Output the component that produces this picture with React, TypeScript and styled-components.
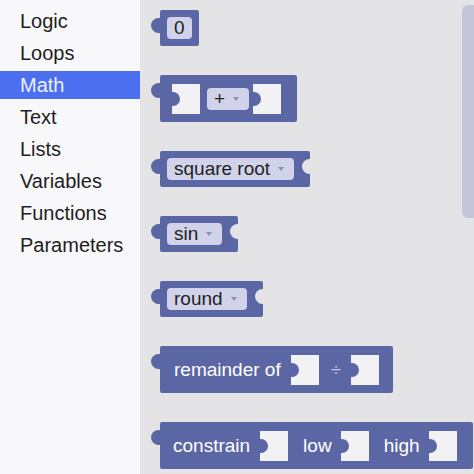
import React from 'react';
import styled, { createGlobalStyle, css } from 'styled-components';

const BLOCK = '#5b67a5';
const FLY = '#e4e4e6';

const GlobalStyle = createGlobalStyle`
  html, body { margin: 0; padding: 0; background: ${FLY}; }
  body { font-family: "Liberation Sans", Arial, sans-serif; }
  * { box-sizing: border-box; }
`;

const Page = styled.div`
  display: flex;
  width: 474px;
  height: 474px;
  overflow: hidden;
`;

const Toolbox = styled.nav`
  width: 140px;
  flex: none;
  background: #f8f8fa;
  padding-top: 7px;
  display: flex;
  flex-direction: column;
  gap: 4px;
`;

const Category = styled.div<{ $selected?: boolean }>`
  height: 28px;
  display: flex;
  align-items: center;
  padding: 1px 0 0 20px;
  font-size: 20px;
  color: ${(p) => (p.$selected ? '#eef2ff' : '#1e1e1e')};
  background: ${(p) => (p.$selected ? '#4c6ff0' : 'transparent')};
`;

const Flyout = styled.div`
  flex: 1;
  position: relative;
  background: ${FLY};
  padding: 10px 0 0 20px;
  display: flex;
  flex-direction: column;
  align-items: flex-start;
  gap: 29px;
`;

const Scrollbar = styled.div`
  position: absolute;
  right: 0;
  top: 5px;
  width: 12px;
  height: 213px;
  background: #c4c6d9;
  border-radius: 6px 0 0 6px;
`;

const Block = styled.div<{ $tall?: boolean; $pl?: number; $pr?: number; $notch?: boolean }>`
  position: relative;
  display: flex;
  align-items: center;
  flex: none;
  white-space: nowrap;
  height: ${(p) => (p.$tall ? 47 : 36)}px;
  padding: 0 ${(p) => p.$pr ?? 7}px 0 ${(p) => p.$pl ?? 7}px;
  background: ${BLOCK};
  border-radius: 2px;
  &::before {
    content: '';
    position: absolute;
    left: -9px;
    top: 8px;
    width: 10px;
    height: 15px;
    background: ${BLOCK};
    border-radius: 8px 0 0 8px;
  }
  ${(p) =>
    p.$notch &&
    css`
      &::after {
        content: '';
        position: absolute;
        right: 0;
        top: 8px;
        width: 8px;
        height: 15px;
        background: ${FLY};
        border-radius: 8px 0 0 8px;
      }
    `}
`;

const Field = styled.div<{ $ml?: number; $dropdown?: boolean }>`
  display: flex;
  align-items: center;
  gap: 8px;
  height: 22px;
  margin-left: ${(p) => p.$ml ?? 0}px;
  padding: 0 ${(p) => (p.$dropdown ? 10 : 7)}px 0 7px;
  background: #d0d3ea;
  border-radius: 4px;
  font-size: 19px;
  color: #222;
`;

const Arrow = styled.span`
  width: 0;
  height: 0;
  border-left: 3.5px solid transparent;
  border-right: 3.5px solid transparent;
  border-top: 4px solid #8a8fb5;
`;

const Label = styled.span<{ $ml?: number; $dim?: boolean }>`
  margin-left: ${(p) => p.$ml ?? 0}px;
  font-size: 19px;
  color: ${(p) => (p.$dim ? '#c3c7e4' : '#ffffff')};
`;

const Slot = styled.div<{ $ml?: number }>`
  position: relative;
  flex: none;
  width: 28px;
  height: 30px;
  margin-left: ${(p) => p.$ml ?? 0}px;
  background: #f2f2f4;
  &::before {
    content: '';
    position: absolute;
    left: 0;
    top: 8px;
    width: 8px;
    height: 14px;
    background: ${BLOCK};
    border-radius: 0 7px 7px 0;
  }
`;

const categories = ['Logic', 'Loops', 'Math', 'Text', 'Lists', 'Variables', 'Functions', 'Parameters'];

const Dropdown: React.FC<{ text: string; ml?: number }> = ({ text, ml }) => (
  <Field $dropdown $ml={ml}>
    <span>{text}</span>
    <Arrow />
  </Field>
);

export default function App() {
  return (
    <Page>
      <GlobalStyle />
      <Toolbox>
        {categories.map((c) => (
          <Category key={c} $selected={c === 'Math'}>
            {c}
          </Category>
        ))}
      </Toolbox>
      <Flyout>
        <Block>
          <Field>0</Field>
        </Block>
        <Block $tall $pl={12} $pr={16}>
          <Slot />
          <Dropdown text="+" ml={7} />
          <Slot $ml={4} />
        </Block>
        <Block $notch $pr={16}>
          <Dropdown text="square root" />
        </Block>
        <Block $notch $pr={16}>
          <Dropdown text="sin" />
        </Block>
        <Block $notch $pr={16}>
          <Dropdown text="round" />
        </Block>
        <Block $tall $pl={14} $pr={14}>
          <Label>remainder of</Label>
          <Slot $ml={10} />
          <Label $dim $ml={12}>÷</Label>
          <Slot $ml={10} />
        </Block>
        <Block $tall $pl={13} $pr={16}>
          <Label>constrain</Label>
          <Slot $ml={10} />
          <Label $ml={15}>low</Label>
          <Slot $ml={9} />
          <Label $ml={15}>high</Label>
          <Slot $ml={9} />
        </Block>
        <Scrollbar />
      </Flyout>
    </Page>
  );
}
